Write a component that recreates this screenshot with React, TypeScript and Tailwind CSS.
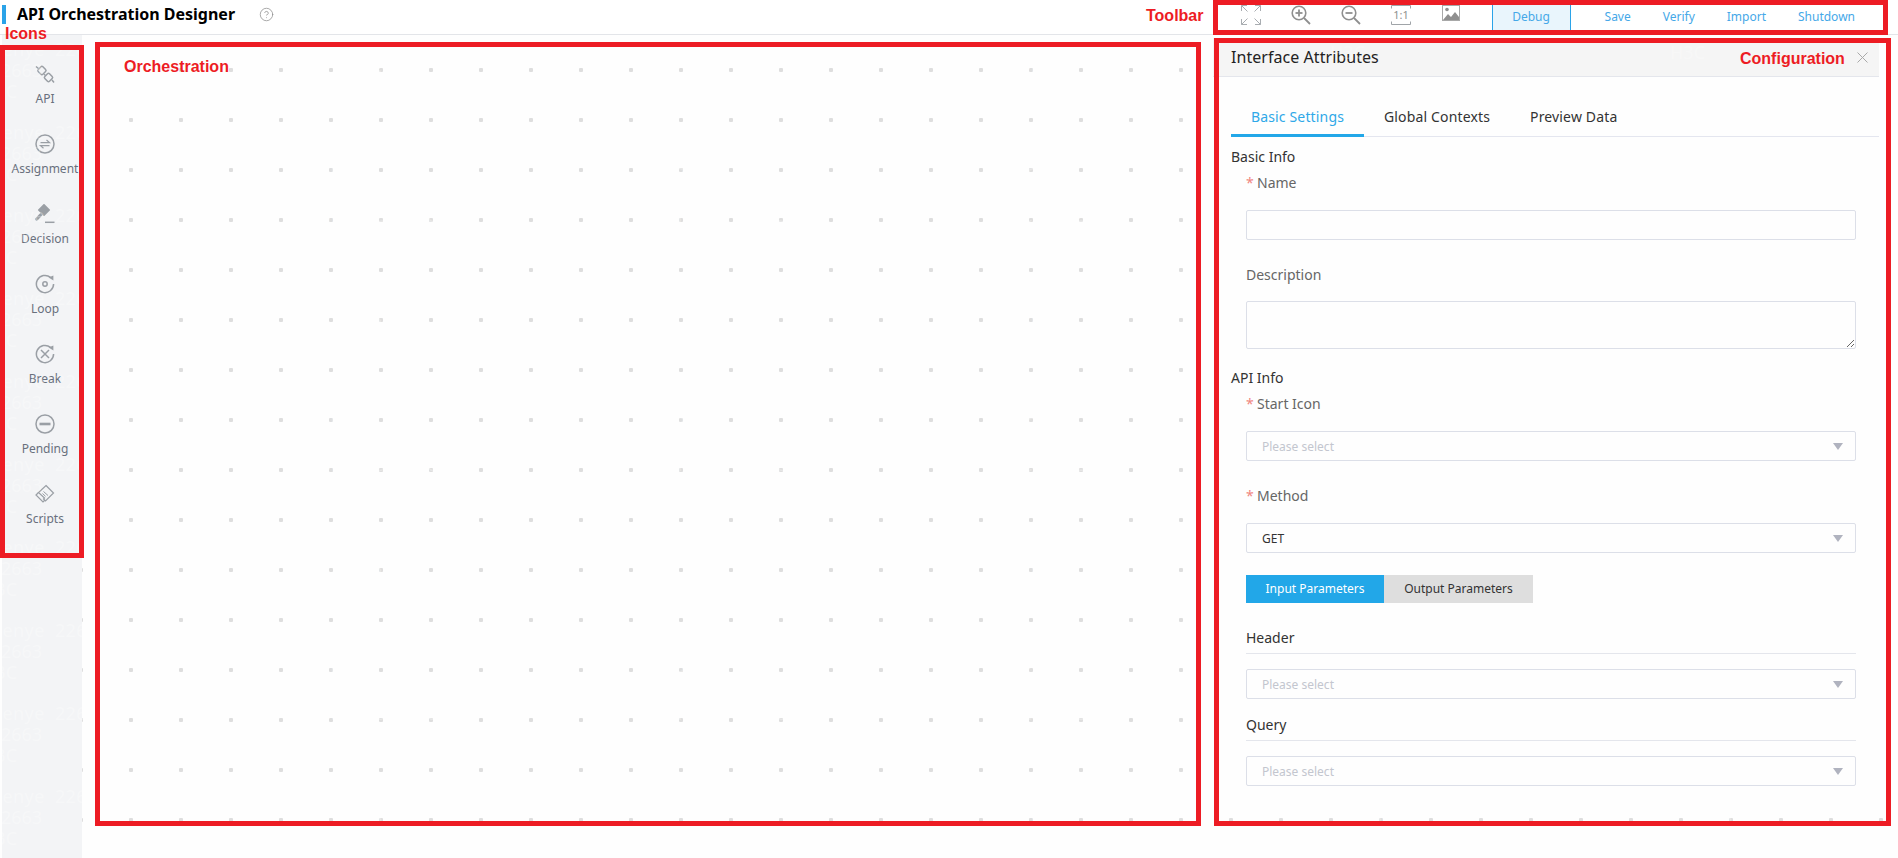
// API Orchestration Designer, annotated screenshot: toolbar, icon rail, canvas, config panel
import { CircleHelp } from 'lucide-react';
import type { ReactNode } from 'react';

const FONT = "font-['Noto_Sans','Liberation_Sans',sans-serif]";
const GRAY = '#9a9fa5';

function rail(children: ReactNode) {
  return (
    <svg width="20" height="20" viewBox="0 0 20 20" fill="none" stroke={GRAY} strokeWidth="1.5">
      {children}
    </svg>
  );
}

const RAIL_ITEMS: { label: string; icon: ReactNode }[] = [
  {
    label: 'API',
    icon: rail(
      <>
        <path d="M1 2.5l3 2.5M17 16l2 2.5" />
        <rect x="3.6" y="3.2" width="6.6" height="6.6" rx="1.4" transform="rotate(45 6.9 6.5)" />
        <rect x="10.2" y="10.2" width="6.6" height="6.6" rx="1.4" transform="rotate(45 13.5 13.5)" />
        <path d="M9 10.2l1.8 1.6" strokeWidth="1.2" />
      </>,
    ),
  },
  {
    label: 'Assignment',
    icon: rail(
      <>
        <circle cx="10" cy="10" r="9" />
        <path d="M5.5 8.6h9l-3-2.6M14.5 11.6h-9l3 2.6" strokeWidth="1.2" />
      </>,
    ),
  },
  {
    label: 'Decision',
    icon: rail(
      <>
        <rect x="4.5" y="1.5" width="9" height="9" rx="0.8" fill={GRAY} stroke="none" transform="rotate(45 9 6)" />
        <path d="M6.5 10L1.8 15" strokeWidth="3.2" strokeLinecap="round" />
        <path d="M10 18.3h9.5" />
      </>,
    ),
  },
  {
    label: 'Loop',
    icon: rail(
      <>
        <path d="M15.5 3.4A8.6 8.6 0 1 0 18.6 10" />
        <path d="M13.6 3.6l4.8-2v5z" fill={GRAY} stroke="none" />
        <circle cx="10" cy="10" r="2.2" />
      </>,
    ),
  },
  {
    label: 'Break',
    icon: rail(
      <>
        <path d="M15.5 3.4A8.6 8.6 0 1 0 18.6 10" />
        <path d="M13.6 3.6l4.8-2v5z" fill={GRAY} stroke="none" />
        <path d="M6 6l8 8M14 6l-8 8" />
      </>,
    ),
  },
  {
    label: 'Pending',
    icon: rail(
      <>
        <circle cx="10" cy="10" r="9" />
        <path d="M4.5 10h11" strokeWidth="2.6" />
      </>,
    ),
  },
  {
    label: 'Scripts',
    icon: rail(
      <>
        <path d="M11 1.5l7.5 7.5-8 8-2-2 1-1-6-5.5z" strokeWidth="1.2" />
        <path d="M3.5 8.5L1 11l7 7 2-2" strokeWidth="1.2" />
        <path d="M8.5 7.5l4.5 4M7.5 9.5l3 2.8" strokeWidth="1" />
      </>,
    ),
  },
];

function ZoomIcon({ plus }: { plus?: boolean }) {
  return (
    <svg width="20" height="20" viewBox="0 0 20 20" fill="none" stroke="#8f8f8f" strokeWidth="1.6">
      <circle cx="8" cy="8" r="6.8" />
      <path d="M4.5 8h7" strokeWidth="1.8" />
      {plus && <path d="M8 4.5v7" strokeWidth="1.8" />}
      <path d="M13 13l6 6" strokeWidth="1.8" />
    </svg>
  );
}

function ToolbarIcons() {
  return (
    <div className="flex items-start pt-[5px]">
      <span className="flex w-[50px] justify-center">
        <svg width="20" height="20" viewBox="0 0 20 20" fill="none" stroke="#a9adb1" strokeWidth="1">
          <path d="M.5 6V.5H6M.5.5l6 6M14 .5h5.5V6M19.5.5l-6 6M.5 14v5.5H6M.5 19.5l6-6M14 19.5h5.5V14M19.5 19.5l-6-6" />
        </svg>
      </span>
      <span className="flex w-[50px] justify-center"><ZoomIcon plus /></span>
      <span className="flex w-[50px] justify-center"><ZoomIcon /></span>
      <span className="flex w-[50px] justify-center">
        <svg width="20" height="20" viewBox="0 0 20 20" fill="none" stroke="#a0a4a8" strokeWidth="1">
          <path d="M.5 3.5v-3h19v3M.5 16.5v3h19v-3" />
          <text x="10" y="14" textAnchor="middle" fontSize="11" fill="#8f8f8f" stroke="none" fontFamily="Noto Sans, sans-serif">1:1</text>
        </svg>
      </span>
      <span className="flex w-[50px] justify-center">
        <svg width="18" height="16" viewBox="0 0 18 16" fill="none">
          <rect x=".5" y=".5" width="17" height="15" stroke="#a8a8a8" />
          <circle cx="5" cy="4.5" r="1.8" fill="#8f8f8f" />
          <path d="M1 15l5-6 3 3 4-5 4 5v3z" fill="#8f8f8f" />
        </svg>
      </span>
    </div>
  );
}

function Header() {
  return (
    <header className="flex h-[35px] items-start border-b border-[#e3e5e9]">
      <span className="mt-[5px] ml-[2px] h-[19px] w-[4px] bg-[#2ba3e8]" />
      <h1 className="mt-[2px] ml-[11px] text-[16px] leading-[24px] font-bold text-black">API Orchestration Designer</h1>
      <CircleHelp className="mt-[7px] ml-[24px]" size={15} strokeWidth={1.2} color="#8d8d8d" />
      <div className="ml-auto flex h-[30px] items-start pr-[43px]">
        <ToolbarIcons />
        <div className="ml-[16px] flex h-[30px] items-center gap-[32px] pt-[4px] text-[12px] text-[#45a8e8]">
          <span className="-mt-[4px] flex h-[30px] w-[79px] items-center justify-center border-x border-[#2ba3e8] bg-[#e9f5fc] pt-[4px]">Debug</span>
          <span className="ml-[2px]">Save</span>
          <span>Verify</span>
          <span>Import</span>
          <span>Shutdown</span>
        </div>
      </div>
    </header>
  );
}

function Sidebar() {
  return (
    <aside className="ml-[2px] w-[80px] shrink-0 bg-[#f3f4f6] pt-[29px] pl-[6px]">
      {RAIL_ITEMS.map((item) => (
        <div key={item.label} className="flex h-[70px] flex-col items-center">
          {item.icon}
          <span className="mt-[7px] text-[12px] leading-[16px] whitespace-nowrap text-[#69707d]">{item.label}</span>
        </div>
      ))}
    </aside>
  );
}

// faint account stamp tiled over the page; `tiles` sets how far it repeats
function Watermark({ tiles, offset, count }: { tiles: string; offset: string; count: number }) {
  return (
    <div aria-hidden className="pointer-events-none absolute inset-0 overflow-hidden select-none">
      <div className={`flex flex-wrap ${tiles} ${offset}`}>
        {Array.from({ length: count }, (_, i) => (
          <div key={i} className="h-[83px] w-[340px] text-[18px] leading-[21px] text-white/30">
            <p className="tracking-[0.4px] whitespace-pre">{'shenye  22663'}</p>
            <p>s22663</p>
            <p>H3C</p>
          </div>
        ))}
      </div>
    </div>
  );
}

function FieldLabel({ children, required }: { children: ReactNode; required?: boolean }) {
  return (
    <div className="flex text-[14px] leading-[20px] text-[#666]">
      {required && <span className="w-[11px] text-[#f0857f]">*</span>}
      {children}
    </div>
  );
}

function SelectBox({ value, className = '' }: { value?: string; className?: string }) {
  return (
    <div className={`flex h-[30px] items-center justify-between rounded-[2px] border border-[#dcdfe8] pr-[12px] pl-[15px] text-[12px] ${className}`}>
      <span className={`pt-px ${value ? 'text-[#333]' : 'text-[#c3c6cf]'}`}>{value ?? 'Please select'}</span>
      <span className="h-0 w-0 border-x-[5px] border-t-[7px] border-x-transparent border-t-[#b0b3bf]" />
    </div>
  );
}

function ConfigPanel() {
  return (
    <section className="relative ml-auto h-[783px] w-[685px] bg-[#fefefe] pt-[3px] pr-[19px]">
      <div className="flex h-[39px] items-center justify-between border-b border-[#e4e6ec] bg-[#f5f5f5] pr-[11px] pl-[18px]">
        <span className="text-[16px] leading-[22px] tracking-[0.05px] text-[#222]">Interface Attributes</span>
        <svg width="11" height="11" viewBox="0 0 11 11" stroke="#a9a9a9" strokeWidth="1">
          <path d="M.5.5l10 10M10.5.5l-10 10" />
        </svg>
      </div>

      <Watermark tiles="w-[680px]" offset="-mt-[35px] ml-[117px]" count={20} />

      <div className="relative pl-[18px]">
        <div className="mt-[20px] flex h-[40px] border-b border-[#e4e6ef] text-[14px] leading-[20px] tracking-[0.15px] text-[#333]">
          <span className="-mb-px border-b-[3px] border-[#22a7e8] px-5 pt-[10px] text-[#2fa8e8]">Basic Settings</span>
          <span className="px-5 pt-[10px]">Global Contexts</span>
          <span className="px-5 pt-[10px]">Preview Data</span>
        </div>

        <p className="mt-[10px] text-[14px] leading-[20px] text-[#333]">Basic Info</p>
        <div className="w-[625px] pl-[15px]">
          <div className="mt-[6px]"><FieldLabel required>Name</FieldLabel></div>
          <input className="mt-[17px] block h-[30px] w-full rounded-[2px] border border-[#dcdfe8]" />
          <div className="mt-[25px]"><FieldLabel>Description</FieldLabel></div>
          <textarea className="mt-[16px] block h-[48px] w-full resize-y rounded-[2px] border border-[#dcdfe8]" />
        </div>

        <p className="mt-[19px] text-[14px] leading-[20px] text-[#333]">API Info</p>
        <div className="w-[625px] pl-[15px]">
          <div className="mt-[6px]"><FieldLabel required>Start Icon</FieldLabel></div>
          <SelectBox className="mt-[17px]" />
          <div className="mt-[25px]"><FieldLabel required>Method</FieldLabel></div>
          <SelectBox className="mt-[17px]" value="GET" />

          <div className="mt-[22px] flex h-[28px] text-[12px]">
            <span className="flex w-[138px] items-center justify-center bg-[#22a7e8] text-white">Input Parameters</span>
            <span className="flex w-[149px] items-center justify-center bg-[#dedede] text-[#333]">Output Parameters</span>
          </div>

          <p className="mt-[25px] border-b border-[#e4e6ec] pb-[5px] text-[14px] leading-[20px] text-[#333]">Header</p>
          <SelectBox className="mt-[15px]" />
          <p className="mt-[16px] border-b border-[#e4e6ec] pb-[5px] text-[14px] leading-[20px] text-[#333]">Query</p>
          <SelectBox className="mt-[15px]" />
        </div>
      </div>
    </section>
  );
}

// red boxes and captions drawn on the screenshot by whoever annotated it
function Annotations() {
  const label = "absolute font-['Liberation_Sans',sans-serif] text-[16px] leading-[18px] font-bold text-[#ed1c24]";
  const box = 'pointer-events-none absolute border-[5px] border-[#ed1c24]';
  return (
    <>
      <div className={`${box} top-[45px] left-0 h-[513px] w-[84px]`} />
      <div className={`${box} top-[42px] left-[95px] h-[784px] w-[1106px]`} />
      <div className={`${box} top-0 left-[1213px] h-[35px] w-[675px]`} />
      <div className={`${box} top-[38px] left-[1214px] h-[788px] w-[677px]`} />
      <span className={`${label} top-[25px] left-[5px]`}>Icons</span>
      <span className={`${label} top-[58px] left-[124px]`}>Orchestration</span>
      <span className={`${label} top-[7px] left-[1146px]`}>Toolbar</span>
      <span className={`${label} top-[50px] left-[1740px]`}>Configuration</span>
    </>
  );
}

export default function App() {
  return (
    <div className={`relative h-[858px] w-[1898px] overflow-hidden bg-white ${FONT}`}>
      <Header />
      <main className="relative flex h-[823px] bg-[#fefefe] bg-[radial-gradient(circle,#dedede_2px,transparent_2.5px)] bg-size-[50px_50px] bg-position-[6px_10px]">
        <Sidebar />
        <Watermark tiles="w-[2040px]" offset="mt-[4px] -ml-[18px]" count={66} />
        <ConfigPanel />
      </main>
      <Annotations />
    </div>
  );
}
